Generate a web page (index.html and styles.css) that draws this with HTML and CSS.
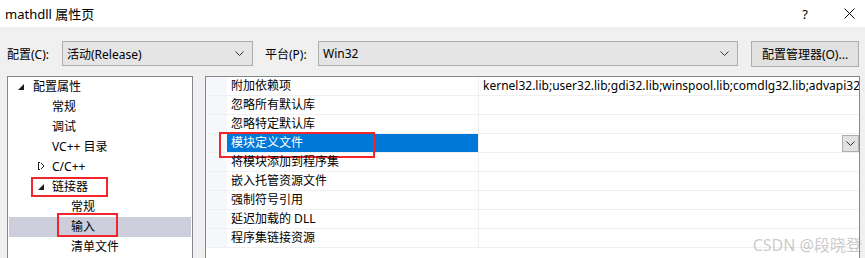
FILE: index.html
```html
<!DOCTYPE html>
<html lang="zh-CN">
<head>
  <meta charset="UTF-8">
  <title>mathdll 属性页</title>
  <link rel="stylesheet" href="styles.css">
</head>
<body>
  <div class="janela">
    <div class="titulo">
      <span class="titulo-texto">mathdll 属性页</span>
      <span class="titulo-ajuda">?</span>
      <span class="titulo-fechar">
        <svg width="11" height="11" viewBox="0 0 11 11"><path d="M0.5 0.5 L10.5 10.5 M10.5 0.5 L0.5 10.5" stroke="#000" stroke-width="1"/></svg>
      </span>
    </div>

    <div class="barra">
      <span class="rotulo rotulo-config">配置(C):</span>
      <div class="combo combo-config">
        <span>活动(Release)</span>
        <svg width="9" height="6" viewBox="0 0 9 6"><path d="M0.5 0.5 L4.5 4.5 L8.5 0.5" fill="none" stroke="#333" stroke-width="1"/></svg>
      </div>
      <span class="rotulo rotulo-plat">平台(P):</span>
      <div class="combo combo-plat">
        <span>Win32</span>
        <svg width="9" height="6" viewBox="0 0 9 6"><path d="M0.5 0.5 L4.5 4.5 L8.5 0.5" fill="none" stroke="#333" stroke-width="1"/></svg>
      </div>
      <button class="botao">配置管理器(O)...</button>
    </div>

    <div class="principal">
      <div class="arvore">
        <div class="no nivel0"><span class="seta aberta"></span>配置属性</div>
        <div class="no nivel1">常规</div>
        <div class="no nivel1">调试</div>
        <div class="no nivel1">VC++ 目录</div>
        <div class="no nivel1"><span class="seta fechada"></span>C/C++</div>
        <div class="no nivel1"><span class="seta aberta"></span>链接器<span class="marca marca-link"></span></div>
        <div class="no nivel2">常规</div>
        <div class="no nivel2 ativo">输入<span class="marca marca-input"></span></div>
        <div class="no nivel2">清单文件</div>
      </div>

      <div class="grade">
        <div class="linha">
          <div class="margem"></div>
          <div class="nome">附加依赖项</div>
          <div class="valor">kernel32.lib;user32.lib;gdi32.lib;winspool.lib;comdlg32.lib;advapi32.lib;shell32.lib;ole32.lib;oleaut32.lib</div>
        </div>
        <div class="linha">
          <div class="margem"></div>
          <div class="nome">忽略所有默认库</div>
          <div class="valor"></div>
        </div>
        <div class="linha">
          <div class="margem"></div>
          <div class="nome">忽略特定默认库</div>
          <div class="valor"></div>
        </div>
        <div class="linha selecionada">
          <div class="margem"></div>
          <div class="nome">模块定义文件<span class="marca marca-grade"></span></div>
          <div class="valor">
            <span class="drop">
              <svg width="9" height="6" viewBox="0 0 9 6"><path d="M0.5 0.5 L4.5 4.5 L8.5 0.5" fill="none" stroke="#333" stroke-width="1"/></svg>
            </span>
          </div>
        </div>
        <div class="linha">
          <div class="margem"></div>
          <div class="nome">将模块添加到程序集</div>
          <div class="valor"></div>
        </div>
        <div class="linha">
          <div class="margem"></div>
          <div class="nome">嵌入托管资源文件</div>
          <div class="valor"></div>
        </div>
        <div class="linha">
          <div class="margem"></div>
          <div class="nome">强制符号引用</div>
          <div class="valor"></div>
        </div>
        <div class="linha">
          <div class="margem"></div>
          <div class="nome">延迟加载的 DLL</div>
          <div class="valor"></div>
        </div>
        <div class="linha">
          <div class="margem"></div>
          <div class="nome">程序集链接资源</div>
          <div class="valor"></div>
        </div>
      </div>
    </div>

    <div class="marca-dagua">CSDN @段晓登</div>
  </div>
</body>
</html>
```

FILE: styles.css
```css
body {
  margin: 0;
  font-family: "Noto Sans", "Noto Sans CJK SC", sans-serif;
  font-size: 12px;
  color: #000;
  background-color: #f0f0f0;
}

.janela {
  position: relative;
  width: 865px;
  height: 258px;
  overflow: hidden;
}

.titulo {
  display: flex;
  align-items: center;
  height: 27px;
  background-color: #fff;
  padding-left: 5px;
}

.titulo-texto {
  font-size: 13px;
  flex: 1;
}

.titulo-ajuda {
  font-size: 13px;
  margin-right: 36px;
}

.titulo-fechar {
  display: flex;
  margin-right: 10px;
}

.barra {
  display: flex;
  align-items: center;
  margin-top: 14px;
  height: 25px;
  padding-left: 7px;
}

.rotulo {
  white-space: nowrap;
}

.rotulo-config {
  width: 55px;
}

.rotulo-plat {
  width: 53px;
  margin-left: 12px;
}

.combo {
  display: flex;
  align-items: center;
  justify-content: space-between;
  box-sizing: border-box;
  height: 25px;
  background-color: #e5e5e5;
  border: 1px solid #adadad;
  padding: 0 8px 0 4px;
}

.combo-config {
  width: 191px;
}

.combo-plat {
  width: 420px;
}

.botao {
  box-sizing: border-box;
  width: 108px;
  height: 26px;
  margin-left: 13px;
  background-color: #e1e1e1;
  border: 1px solid #adadad;
  font-family: inherit;
  font-size: 12px;
  padding: 0;
}

.principal {
  display: flex;
  margin-top: 10px;
  padding-left: 7px;
  gap: 12px;
}

.arvore {
  box-sizing: border-box;
  width: 186px;
  height: 200px;
  background-color: #fff;
  border: 1px solid #828790;
  padding-top: 0;
}

.no {
  position: relative;
  height: 20px;
  line-height: 20px;
  margin: 0 1px;
  white-space: nowrap;
}

.nivel0 { padding-left: 24px; }
.nivel1 { padding-left: 43px; }
.nivel2 { padding-left: 62px; }

.no.ativo {
  background-color: #cccedb;
}

.seta {
  position: absolute;
  top: 7px;
  width: 0;
  height: 0;
}

.nivel0 .seta { left: 9px; }
.nivel1 .seta { left: 29px; }

.seta.aberta {
  border-left: 6px solid transparent;
  border-bottom: 6px solid #1e1e1e;
}

.seta.fechada {
  top: 5px;
  width: 5px;
  height: 8px;
  border: none;
  background: linear-gradient(to top right, transparent 48%, #1e1e1e 48%, #1e1e1e 58%, transparent 58%) top/5px 4px no-repeat,
              linear-gradient(to bottom right, transparent 48%, #1e1e1e 48%, #1e1e1e 58%, transparent 58%) bottom/5px 4px no-repeat;
  border-left: 1px solid #1e1e1e;
}

.grade {
  box-sizing: border-box;
  width: 655px;
  height: 200px;
  background-color: #fff;
  border: 1px solid #828790;
  border-bottom: none;
}

.linha {
  display: flex;
  height: 19px;
  box-sizing: border-box;
  border-bottom: 1px solid #f0f0f0;
}

.margem {
  width: 21px;
  background-color: #f5f7fb;
}

.nome {
  position: relative;
  box-sizing: border-box;
  width: 252px;
  padding-left: 4px;
  line-height: 18px;
  border-right: 1px solid #f0f0f0;
  white-space: nowrap;
}

.valor {
  flex: 1;
  padding-left: 4px;
  line-height: 18px;
  white-space: nowrap;
  overflow: hidden;
  display: flex;
  justify-content: flex-end;
}

.linha:first-child .valor {
  justify-content: flex-start;
}

.selecionada .nome {
  background-color: #0078d7;
  color: #fff;
}

.drop {
  display: flex;
  align-items: center;
  justify-content: center;
  box-sizing: border-box;
  width: 17px;
  height: 17px;
  margin-top: 1px;
  background-color: #e1e1e1;
  border: 1px solid #adadad;
}

.marca {
  position: absolute;
  border: 2px solid #f0262a;
  box-sizing: border-box;
}

.marca-link {
  left: 22px;
  top: 0;
  width: 77px;
  height: 20px;
}

.marca-input {
  left: 48px;
  top: -4px;
  width: 61px;
  height: 24px;
}

.marca-grade {
  left: -8px;
  top: -2px;
  width: 156px;
  height: 26px;
}

.marca-dagua {
  position: absolute;
  right: 3px;
  bottom: 2px;
  font-size: 16px;
  color: rgba(150, 150, 150, 0.5);
}
```
